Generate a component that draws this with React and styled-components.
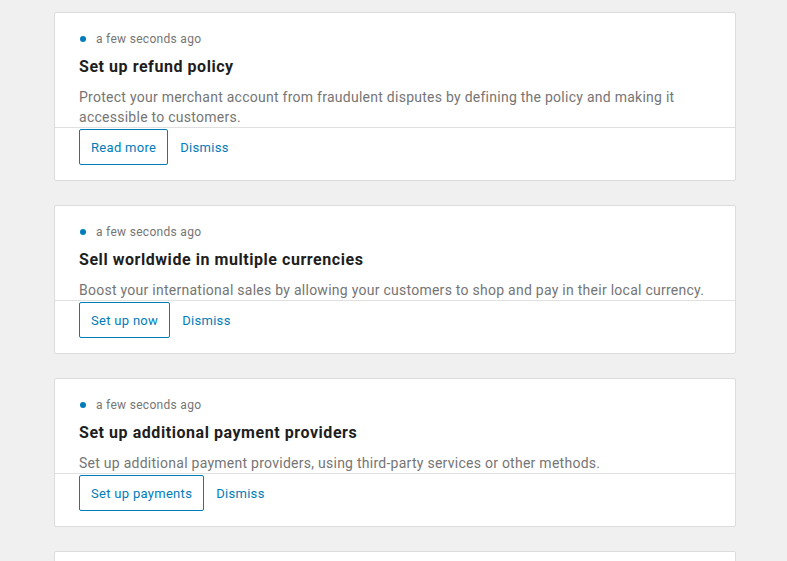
import React from 'react';
import styled, { createGlobalStyle } from 'styled-components';

const GlobalStyle = createGlobalStyle`
  html, body {
    margin: 0;
    padding: 0;
    background: #f0f0f1;
  }
  body {
    font-family: Roboto, "Noto Sans", "Liberation Sans", sans-serif;
    -webkit-font-smoothing: antialiased;
  }
`;

const notes = [
  {
    title: 'Set up refund policy',
    body: 'Protect your merchant account from fraudulent disputes by defining the policy and making it accessible to customers.',
    action: 'Read more',
  },
  {
    title: 'Sell worldwide in multiple currencies',
    body: 'Boost your international sales by allowing your customers to shop and pay in their local currency.',
    action: 'Set up now',
  },
  {
    title: 'Set up additional payment providers',
    body: 'Set up additional payment providers, using third-party services or other methods.',
    action: 'Set up payments',
  },
  {
    title: 'Customize your store',
    body: 'Make your store stand out with a theme that fits your brand.',
    action: 'Learn more',
  },
];

function App() {
  return (
    <>
      <GlobalStyle />
      <Inbox>
        {notes.map((note) => (
          <Card key={note.title}>
            <Content>
              <Meta>
                <Dot />
                <span>a few seconds ago</span>
              </Meta>
              <Title>{note.title}</Title>
              <Body>{note.body}</Body>
            </Content>
            <Actions>
              <OutlineButton>{note.action}</OutlineButton>
              <LinkButton>Dismiss</LinkButton>
            </Actions>
          </Card>
        ))}
      </Inbox>
    </>
  );
}

export default App;

const Inbox = styled.div`
  display: flex;
  flex-direction: column;
  gap: 24px;
  width: 682px;
  padding: 12px 0 24px 54px;
`;

const Card = styled.div`
  background: #fff;
  border: 1px solid #dcdcde;
  border-radius: 2px;
`;

const Content = styled.div`
  padding: 18px 24px 0;
`;

const Meta = styled.div`
  display: flex;
  align-items: center;
  gap: 10px;
  height: 16px;
  font-size: 12px;
  letter-spacing: 0.3px;
  color: #757575;
`;

const Dot = styled.span`
  width: 6px;
  height: 6px;
  margin-left: 1px;
  border-radius: 50%;
  background: #007cba;
`;

const Title = styled.h3`
  margin: 8px 0 0;
  font-size: 16px;
  line-height: 24px;
  font-weight: 700;
  letter-spacing: 0.55px;
  color: #1e1e1e;
`;

const Body = styled.p`
  margin: 8px 0 0;
  font-size: 14px;
  line-height: 20px;
  letter-spacing: 0.26px;
  color: #757575;
`;

const Actions = styled.div`
  display: flex;
  align-items: center;
  border-top: 1px solid #e0e0e0;
  padding: 1px 24px 15px;
`;

const OutlineButton = styled.button`
  height: 36px;
  padding: 0 11px;
  border: 1px solid #007cba;
  border-radius: 2px;
  background: #fff;
  color: #007cba;
  font-family: inherit;
  font-size: 13px;
  letter-spacing: 0.3px;
`;

const LinkButton = styled.button`
  height: 36px;
  padding: 0 12px;
  border: 0;
  background: none;
  color: #007cba;
  font-family: inherit;
  font-size: 13px;
  letter-spacing: 0.3px;
`;
